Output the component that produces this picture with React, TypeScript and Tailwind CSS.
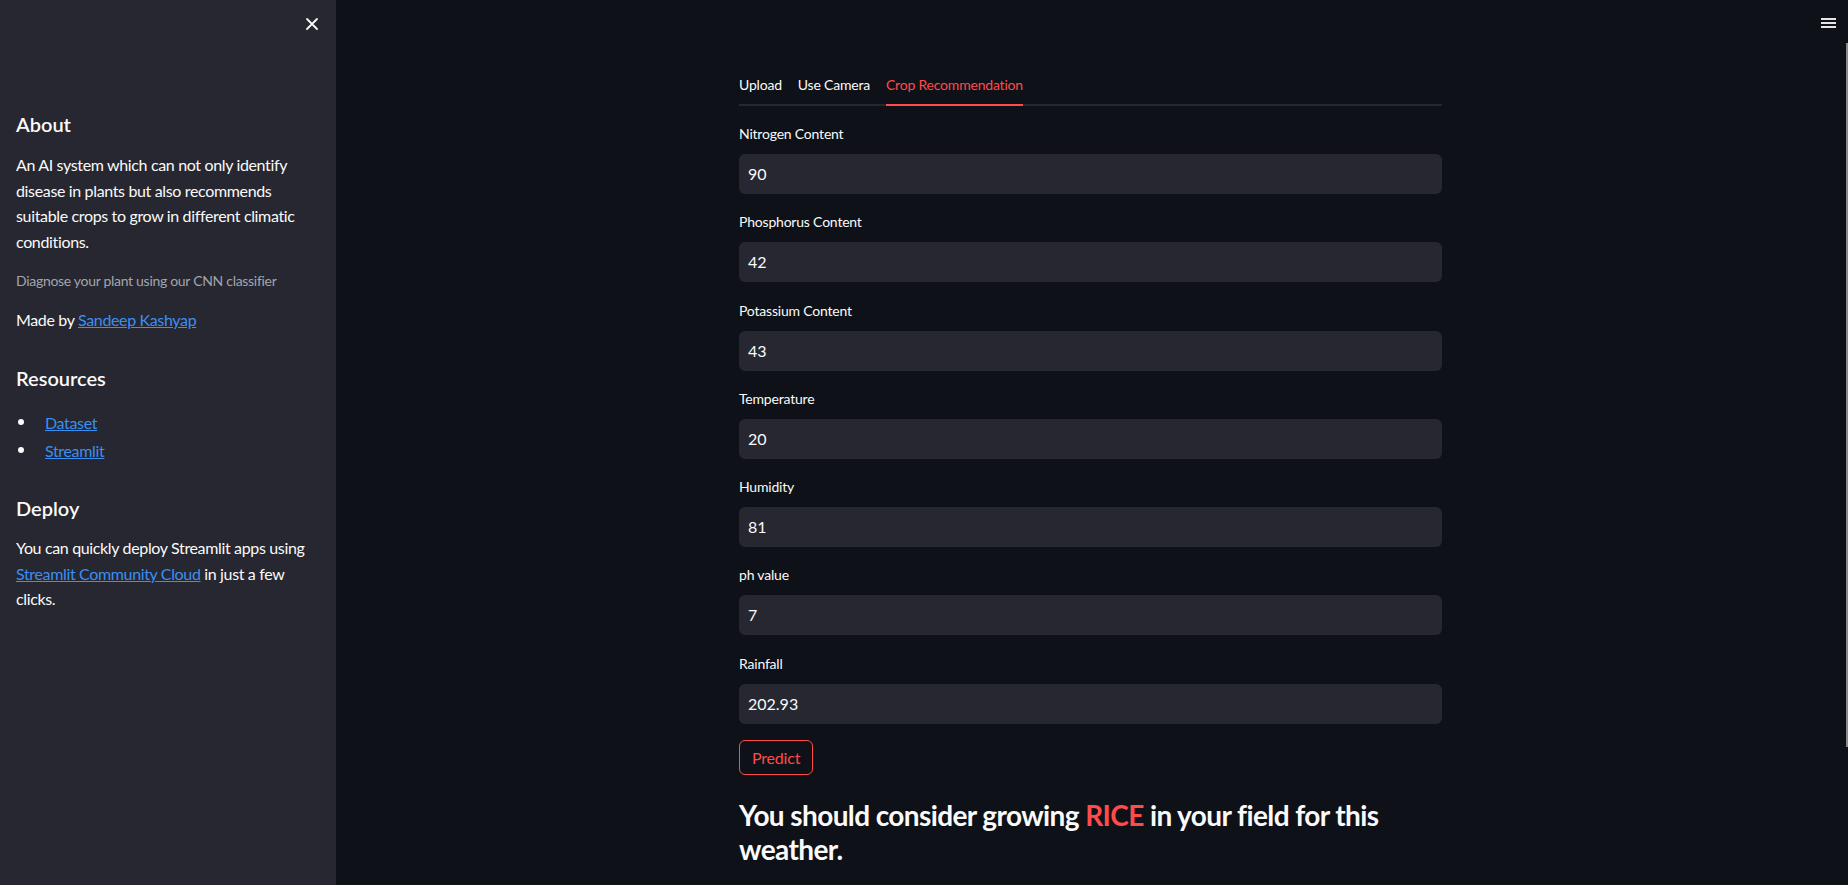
import React from "react";

const font = { fontFamily: "Lato, 'Noto Sans', sans-serif" };

const fields: [string, string][] = [
  ["Nitrogen Content", "90"],
  ["Phosphorus Content", "42"],
  ["Potassium Content", "43"],
  ["Temperature", "20"],
  ["Humidity", "81"],
  ["ph value", "7"],
  ["Rainfall", "202.93"],
];

function Sidebar() {
  return (
    <aside className="relative w-[336px] shrink-0 bg-[#262730] text-[#fafafa] px-4 pt-[112px]">
      <button className="absolute left-[304px] top-[16px] flex h-4 w-4 items-center justify-center text-[#fafafa]">
        <svg width="14" height="14" viewBox="0 0 14 14" fill="none" stroke="currentColor" strokeWidth="1.8" strokeLinecap="round">
          <path d="M2 2 L12 12 M12 2 L2 12" />
        </svg>
      </button>
      <h3 className="text-[20px] leading-[24px] font-semibold">About</h3>
      <p className="mt-4 text-[16px] leading-[25.6px] tracking-[-0.35px]">
        An AI system which can not only identify<br />disease in plants but also recommends<br />suitable crops to grow in different climatic<br />conditions.
      </p>
      <p className="mt-4 text-[14px] leading-[22.4px] tracking-[-0.3px] text-[#a3a5ad]">Diagnose your plant using our CNN classifier</p>
      <p className="mt-[14px] text-[16px] leading-[25.6px] tracking-[-0.35px]">
        Made by <a className="text-[#3b8ff0] underline">Sandeep Kashyap</a>
      </p>
      <h3 className="mt-[34px] text-[20px] leading-[24px] font-semibold">Resources</h3>
      <ul className="mt-[18px] text-[16px] leading-[25.6px] tracking-[-0.35px]">
        <li className="flex h-[28px] items-center">
          <span className="flex w-[29px] justify-start pl-[2px]"><span className="h-[6px] w-[6px] rounded-full bg-[#fafafa]" /></span>
          <a className="text-[#3b8ff0] underline">Dataset</a>
        </li>
        <li className="flex h-[28px] items-center">
          <span className="flex w-[29px] justify-start pl-[2px]"><span className="h-[6px] w-[6px] rounded-full bg-[#fafafa]" /></span>
          <a className="text-[#3b8ff0] underline">Streamlit</a>
        </li>
      </ul>
      <h3 className="mt-[32px] text-[20px] leading-[24px] font-semibold">Deploy</h3>
      <p className="mt-[15px] text-[16px] leading-[25.2px] tracking-[-0.35px]">
        You can quickly deploy Streamlit apps using<br />
        <a className="text-[#3b8ff0] underline">Streamlit Community Cloud</a> in just a few<br />clicks.
      </p>
    </aside>
  );
}

function Main() {
  return (
    <main className="relative flex-1 pr-[3px] text-[#fafafa]">
      <button className="absolute right-[12px] top-[18px] flex flex-col gap-[2px]">
        <span className="block h-[2px] w-[15px] bg-[#e6e6e6]" />
        <span className="block h-[2px] w-[15px] bg-[#e6e6e6]" />
        <span className="block h-[2px] w-[15px] bg-[#e6e6e6]" />
      </button>
      <div className="absolute right-0 top-[43px] h-[704px] w-[2px] bg-[#8a8a8a]" />
      <div className="mx-auto w-[703px] pt-[64px]">
        <div className="relative flex h-[42px] gap-4 border-b-2 border-[#262730] text-[14px] tracking-[-0.2px]">
          <div className="flex h-[40px] items-center">Upload</div>
          <div className="flex h-[40px] items-center">Use Camera</div>
          <div className="relative flex h-[40px] items-center text-[#ff4b4b]">
            Crop Recommendation
            <span className="absolute bottom-[-2px] left-0 right-0 h-[2px] bg-[#ff4b4b]" />
          </div>
        </div>
        <div className="pt-[16px]">
          {fields.map(([label, value]) => (
            <div key={label} className="mb-[16.3px]">
              <div className="mb-2 h-[24px] text-[14px] leading-[24px] tracking-[-0.2px]">{label}</div>
              <div className="flex h-[40px] items-center rounded-[6px] bg-[#262730] pl-[9px] text-[16px]">{value}</div>
            </div>
          ))}
          <button className="flex h-[35px] items-center rounded-[6px] border border-[#ff4b4b] px-[12px] text-[16px] tracking-[-0.2px] text-[#ff4b4b]">
            Predict
          </button>
          <h3 className="mt-[23px] text-[28px] leading-[34px] font-bold tracking-[-0.6px]">
            You should consider growing <span className="text-[#ff4b4b]">RICE</span> in your field for this<br />weather.
          </h3>
        </div>
      </div>
    </main>
  );
}

export default function App() {
  return (
    <div className="flex h-[885px] w-full overflow-hidden bg-[#0e1117]" style={font}>
      <Sidebar />
      <Main />
    </div>
  );
}
